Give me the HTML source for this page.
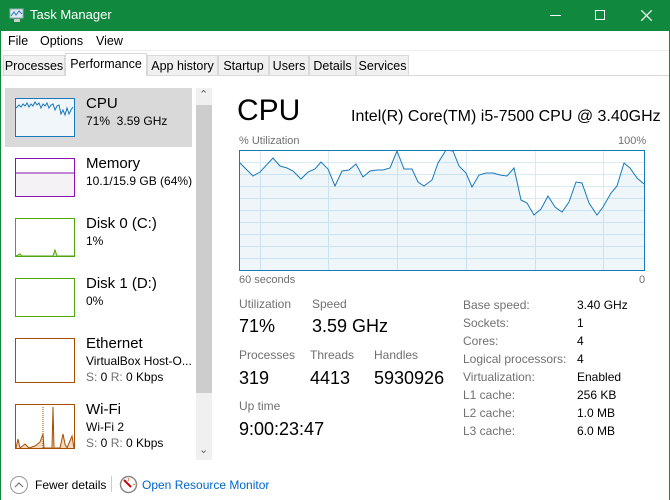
<!DOCTYPE html>
<html><head><meta charset="utf-8"><style>
*{margin:0;padding:0;box-sizing:border-box}
body{width:670px;height:500px;overflow:hidden;background:#fff;font-family:"Liberation Sans","DejaVu Sans",sans-serif;color:#000;position:relative}
.a{position:absolute;white-space:nowrap}
.g{color:#707070}
.tab{position:absolute;top:55px;height:21px;background:#f0f0f0;border:1px solid #d9d9d9;font-size:12.5px;padding-top:3px;text-align:center}
</style></head><body>
<div class="a" style="left:0;top:0;width:670px;height:31px;background:#10893e"></div>
<svg class="a" style="left:9px;top:8px" width="16" height="15"><rect x="1" y="1" width="13" height="9" fill="#dfe9f3" stroke="#9ab"/><polyline points="2,8 5,4 7,7 10,3 13,6" fill="none" stroke="#2a7ab8"/><rect x="5" y="11" width="6" height="3" fill="#ccc"/></svg>
<div class="a" style="left:30px;top:7px;color:#fff;font-size:13px">Task Manager</div>
<div class="a" style="left:550px;top:15px;width:11px;height:1px;background:#fff"></div>
<div class="a" style="left:595px;top:10px;width:10px;height:10px;border:1px solid #fff"></div>
<svg class="a" style="left:641px;top:10px" width="11" height="11"><path d="M0 0L11 11M11 0L0 11" stroke="#fff" stroke-width="1.2"/></svg>
<div class="a" style="left:0;top:31px;width:1px;height:469px;background:#10893e"></div>
<div class="a" style="left:669px;top:31px;width:1px;height:469px;background:#10893e"></div>
<div class="a" style="left:8px;top:34px;font-size:12.5px">File</div>
<div class="a" style="left:40px;top:34px;font-size:12.5px">Options</div>
<div class="a" style="left:96px;top:34px;font-size:12.5px">View</div>
<div class="a" style="left:1px;top:50px;width:668px;height:1px;background:#eee"></div>
<div class="a" style="left:1px;top:75px;width:668px;height:1px;background:#d9d9d9"></div>
<div class="tab" style="left:3px;width:62px">Processes</div>
<div class="tab" style="left:65px;top:53px;height:23px;width:82px;background:#fff;border-bottom:none;padding-top:3px">Performance</div>
<div class="tab" style="left:147px;width:71px">App history</div>
<div class="tab" style="left:218px;width:51px">Startup</div>
<div class="tab" style="left:269px;width:40px">Users</div>
<div class="tab" style="left:309px;width:47px">Details</div>
<div class="tab" style="left:356px;width:53px">Services</div>

<div class="a" style="left:5px;top:88px;width:187px;height:59px;background:#d9d9d9"></div>
<div class="a" style="left:196px;top:88px;width:16px;height:372px;background:#f0f0f0"></div>
<div class="a" style="left:196px;top:105px;width:16px;height:288px;background:#cdcdcd"></div>
<div class="a" style="left:199px;top:88px;font-size:11px;color:#606060">&#8963;</div>
<div class="a" style="left:199px;top:443px;font-size:11px;color:#606060">&#8964;</div>

<svg class="a" style="left:15px;top:98px" width="60" height="40"><rect x="0.5" y="0.5" width="59" height="38" fill="#f1f6fa" stroke="#1779ba"/><polyline points="1,10 4,7 6,9 8,6 10,8 12,5 14,9 16,6 18,8 20,4 22,7 24,5 26,10 28,6 30,8 32,5 34,10 36,7 38,6 40,12 42,8 44,7 46,16 48,12 50,17 52,10 54,16 56,12 58,9" fill="none" stroke="#1779ba"/></svg>
<svg class="a" style="left:15px;top:158px" width="60" height="40"><rect x="0.5" y="0.5" width="59" height="38" fill="#fff" stroke="#8b12ae"/><rect x="1" y="15" width="58" height="23" fill="#f4f2f4"/><line x1="1" y1="15" x2="59" y2="15" stroke="#8b12ae"/></svg>
<svg class="a" style="left:15px;top:218px" width="60" height="40"><rect x="0.5" y="0.5" width="59" height="38" fill="#fff" stroke="#4da60c"/><polyline points="1,38 5,36 7,38 38,38 40,32 42,38 60,38" fill="#cfe8b8" stroke="#4da60c"/></svg>
<svg class="a" style="left:15px;top:278px" width="60" height="40"><rect x="0.5" y="0.5" width="59" height="38" fill="#fff" stroke="#4da60c"/></svg>
<svg class="a" style="left:15px;top:338px" width="60" height="46"><rect x="0.5" y="0.5" width="59" height="44" fill="#fff" stroke="#a74f01"/></svg>
<svg class="a" style="left:15px;top:404px" width="60" height="46"><rect x="0.5" y="0.5" width="59" height="44" fill="#fff" stroke="#a74f01"/><polyline points="1,44 3,35 5,44 10,40 14,44 20,42 25,38 28,30 29,44 33,44 37,44 38,3 39,44 45,44 48,30 50,40 52,44 57,32 59,44" fill="#f1d9c3" stroke="#a74f01"/><line x1="28" y1="3" x2="28" y2="44" stroke="#a74f01" stroke-dasharray="1,1"/></svg>

<div class="a" style="left:86px;top:95px;font-size:15px">CPU</div>
<div class="a" style="left:86px;top:114px;font-size:12px">71%&nbsp; 3.59 GHz</div>
<div class="a" style="left:86px;top:155px;font-size:15px">Memory</div>
<div class="a" style="left:86px;top:174px;font-size:12px">10.1/15.9 GB (64%)</div>
<div class="a" style="left:86px;top:215px;font-size:15px">Disk 0 (C:)</div>
<div class="a" style="left:86px;top:234px;font-size:12px">1%</div>
<div class="a" style="left:86px;top:275px;font-size:15px">Disk 1 (D:)</div>
<div class="a" style="left:86px;top:294px;font-size:12px">0%</div>
<div class="a" style="left:86px;top:335px;font-size:15px">Ethernet</div>
<div class="a" style="left:86px;top:354px;font-size:12px">VirtualBox Host-O...</div>
<div class="a" style="left:86px;top:370px;font-size:12px"><span class="g">S:</span> 0 <span class="g">R:</span> 0 Kbps</div>
<div class="a" style="left:86px;top:401px;font-size:15px">Wi-Fi</div>
<div class="a" style="left:86px;top:420px;font-size:12px">Wi-Fi 2</div>
<div class="a" style="left:86px;top:436px;font-size:12px"><span class="g">S:</span> 0 <span class="g">R:</span> 0 Kbps</div>

<div class="a" style="left:237px;top:94px;font-size:30px">CPU</div>
<div class="a" style="left:351px;top:108px;font-size:16px">Intel(R) Core(TM) i5-7500 CPU @ 3.40GHz</div>
<div class="a g" style="left:239px;top:135px;font-size:11px">% Utilization</div>
<div class="a g" style="left:618px;top:135px;font-size:11px">100%</div>
<svg class="a" style="left:239px;top:150px" width="406" height="121">
<rect x="0" y="0" width="406" height="121" fill="#fff"/>
<g stroke="#d9eaf7" stroke-width="1">
<path d="M0 12.5H406M0 24.5H406M0 36.5H406M0 48.5H406M0 60.5H406M0 72.5H406M0 84.5H406M0 96.5H406M0 108.5H406"/>
<path d="M21.5 0V121M89.5 0V121M158.5 0V121M227.5 0V121M296.5 0V121M364.5 0V121"/>
</g>
<polygon fill="rgba(23,121,186,0.07)" points="0,12 14,26 21,22 34,8 41,16 48,18 54,21 62,29 69,22 76,19 82,12 89,19 96,36 103,21 110,20 117,14 124,27 131,21 138,20 144,20 151,18 158,1 165,19 173,19 179,32 185,36 193,30 199,13 207,0 214,1 220,16 227,23 233,37 240,25 247,23 254,23 261,25 268,26 275,18 282,50 288,53 295,65 302,59 309,46 316,57 323,62 330,52 337,32 343,33 350,53 358,65 364,57 372,43 378,36 385,13 391,18 398,28 405,34 405,120 0,120"/>
<polyline fill="none" stroke="#1779ba" stroke-width="1" points="0,12 14,26 21,22 34,8 41,16 48,18 54,21 62,29 69,22 76,19 82,12 89,19 96,36 103,21 110,20 117,14 124,27 131,21 138,20 144,20 151,18 158,1 165,19 173,19 179,32 185,36 193,30 199,13 207,0 214,1 220,16 227,23 233,37 240,25 247,23 254,23 261,25 268,26 275,18 282,50 288,53 295,65 302,59 309,46 316,57 323,62 330,52 337,32 343,33 350,53 358,65 364,57 372,43 378,36 385,13 391,18 398,28 405,34"/>
<rect x="0.5" y="0.5" width="405" height="120" fill="none" stroke="#1779ba"/>
</svg>
<div class="a g" style="left:239px;top:274px;font-size:11px">60 seconds</div>
<div class="a g" style="left:639px;top:274px;font-size:11px">0</div>

<div class="a g" style="left:239px;top:297px;font-size:12px">Utilization</div>
<div class="a g" style="left:312px;top:297px;font-size:12px">Speed</div>
<div class="a" style="left:239px;top:316px;font-size:18px">71%</div>
<div class="a" style="left:312px;top:316px;font-size:18px">3.59 GHz</div>
<div class="a g" style="left:239px;top:348px;font-size:12px">Processes</div>
<div class="a g" style="left:310px;top:348px;font-size:12px">Threads</div>
<div class="a g" style="left:374px;top:348px;font-size:12px">Handles</div>
<div class="a" style="left:239px;top:368px;font-size:18px">319</div>
<div class="a" style="left:310px;top:368px;font-size:18px">4413</div>
<div class="a" style="left:374px;top:368px;font-size:18px">5930926</div>
<div class="a g" style="left:239px;top:399px;font-size:12px">Up time</div>
<div class="a" style="left:239px;top:419px;font-size:18px">9:00:23:47</div>

<div class="a g" style="left:463px;top:296px;font-size:12px;line-height:18px">Base speed:<br>Sockets:<br>Cores:<br>Logical processors:<br>Virtualization:<br>L1 cache:<br>L2 cache:<br>L3 cache:</div>
<div class="a" style="left:577px;top:296px;font-size:12px;line-height:18px">3.40 GHz<br>1<br>4<br>4<br>Enabled<br>256 KB<br>1.0 MB<br>6.0 MB</div>

<svg class="a" style="left:9px;top:475px" width="20" height="20"><circle cx="10" cy="10" r="8.5" fill="#fff" stroke="#999"/><path d="M6 12L10 8L14 12" fill="none" stroke="#777" stroke-width="1.2"/></svg>
<div class="a" style="left:35px;top:478px;font-size:12px">Fewer details</div>
<div class="a" style="left:111px;top:476px;width:1px;height:16px;background:#ccc"></div>
<svg class="a" style="left:119px;top:475px" width="19" height="19"><circle cx="9.5" cy="9.5" r="8" fill="#fff" stroke="#888" stroke-width="1.5"/><path d="M5 5L12 12" stroke="#c00" stroke-width="2"/><path d="M9.5 3V6M14 9.5H16" stroke="#e85" stroke-width="1"/></svg>
<div class="a" style="left:142px;top:478px;font-size:12px;color:#0066cc">Open Resource Monitor</div>
</body></html>
